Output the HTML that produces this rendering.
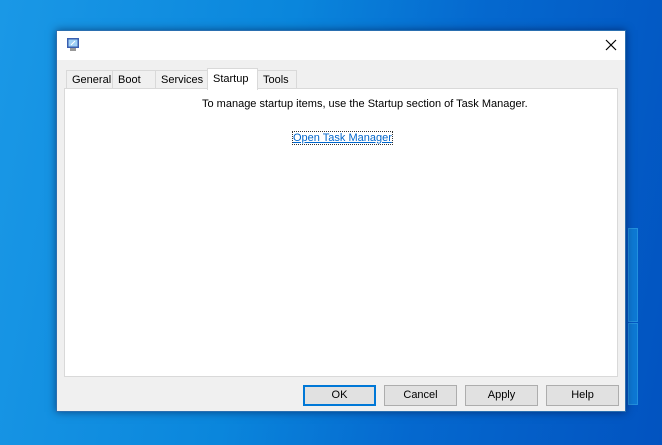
<!DOCTYPE html><html><head><style>
body{margin:0;width:662px;height:445px;overflow:hidden;position:relative;font-family:"Liberation Sans",sans-serif;font-size:11px;
background:linear-gradient(100deg,#1a98e6 0%,#0a86dc 40%,#0569cf 65%,#0253c0 100%);}
.win{position:absolute;left:56px;top:30px;width:570px;height:382px;background:#f0f0f0;box-shadow:0 0 8px rgba(0,0,40,.5);border:1px solid #2a6fb0;box-sizing:border-box}
.title{position:absolute;left:0;top:0;right:0;height:29px;background:#fff}
.tab{position:absolute;top:39px;height:19px;line-height:19px;background:#f0f0f0;border:1px solid #d9d9d9;border-bottom:none;box-sizing:border-box;padding-left:5px;color:#000}
.panel{position:absolute;left:7px;top:57px;width:554px;height:289px;background:#fff;border:1px solid #d9d9d9;box-sizing:border-box}
.btn{position:absolute;top:354px;width:73px;height:21px;background:#e1e1e1;border:1px solid #adadad;box-sizing:border-box;text-align:center;line-height:19px}
.edge{position:absolute;left:628px;width:8px;background:#1590e0;border:1px solid #3ab8f0;opacity:.6}
</style></head><body>
<div class="edge" style="top:228px;height:92px"></div>
<div class="edge" style="top:323px;height:80px"></div>
<div class="win">
<div class="title">
<svg style="position:absolute;left:9px;top:6px" width="14" height="16" viewBox="0 0 14 16"><rect x="1" y="1" width="12" height="10" fill="#3a5fb0"/><rect x="2.5" y="2.5" width="9" height="7" fill="#9fd0f5"/><path d="M5 8l4-4" stroke="#fff"/><rect x="4" y="11" width="6" height="3" fill="#999"/></svg>
<svg style="position:absolute;left:548px;top:8px" width="12" height="12"><path d="M1 1L11 11M11 1L1 11" stroke="#000" stroke-width="1.2"/></svg>
</div>
<div class="tab" style="left:9px;width:47px">General</div>
<div class="tab" style="left:55px;width:44px">Boot</div>
<div class="tab" style="left:98px;width:53px">Services</div>
<div class="tab" style="left:200px;width:40px">Tools</div>
<div class="panel">
<div style="position:absolute;left:137px;top:9px;white-space:nowrap">To manage startup items, use the Startup section of Task Manager.</div>
<div style="position:absolute;left:228px;top:43px;color:#0066cc;text-decoration:underline;outline:1px dotted #333">Open Task Manager</div>
</div>
<div class="tab" style="left:150px;top:37px;width:51px;height:22px;background:#fff;line-height:20px;z-index:2">Startup</div>
<div class="btn" style="left:246px;border:2px solid #0078d7;line-height:17px">OK</div>
<div class="btn" style="left:327px">Cancel</div>
<div class="btn" style="left:408px">Apply</div>
<div class="btn" style="left:489px">Help</div>
</div>
</body></html>
